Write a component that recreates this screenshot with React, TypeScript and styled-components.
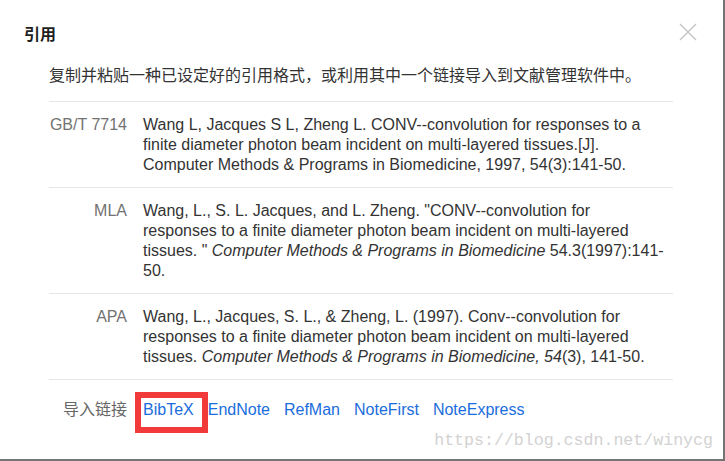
import React from "react";
import styled, { createGlobalStyle } from "styled-components";

const GlobalStyle = createGlobalStyle`
  html, body {
    margin: 0;
    padding: 0;
    background: #fff;
  }
  body {
    font-family: "Liberation Sans", "Noto Sans CJK SC", Arial, sans-serif;
    color: #333;
  }
`;

const Dialog = styled.div`
  position: relative;
  width: 725px;
  height: 461px;
  box-sizing: border-box;
  background: #fff;
  border-right: 2px solid #747474;
  border-bottom: 2px solid #747474;
  overflow: hidden;
`;

const Header = styled.div`
  display: flex;
  align-items: flex-start;
  justify-content: space-between;
  padding: 23px 26px 0 24px;
`;

const Title = styled.h2`
  margin: 0;
  font-size: 16px;
  line-height: 24px;
  font-weight: 700;
  color: #1f1f1f;
`;

const CloseButton = styled.button`
  display: flex;
  width: 18px;
  height: 18px;
  padding: 0;
  border: none;
  background: none;
  cursor: pointer;
  color: #c4c4c4;
`;

const Intro = styled.p`
  margin: 0;
  padding: 18px 50px 14px 49px;
  font-size: 16px;
  line-height: 22px;
  color: #333;
`;

const List = styled.div`
  margin: 0 50px 0 49px;
  border-top: 1px solid #e6e6e6;
`;

const CiteRow = styled.div`
  display: grid;
  grid-template-columns: 78px 522px;
  column-gap: 16px;
  padding: 13px 0 12px;
  border-bottom: 1px solid #e6e6e6;
  font-size: 16px;
  line-height: 20px;
`;

const Style = styled.div`
  text-align: right;
  color: #727272;
  white-space: nowrap;
`;

const Text = styled.div`
  color: #333;
`;

const Footer = styled.div`
  display: grid;
  grid-template-columns: 78px auto;
  column-gap: 16px;
  margin-left: 49px;
  padding-top: 20px;
  font-size: 16px;
  line-height: 20px;
`;

const FooterLabel = styled.span`
  text-align: right;
  color: #666;
`;

const Links = styled.div`
  display: flex;
  gap: 14px;
`;

const Link = styled.a`
  position: relative;
  color: #1a6ddc;
  text-decoration: none;
  cursor: pointer;
`;

const Highlight = styled.span`
  position: absolute;
  left: -8px;
  top: -8px;
  width: 73px;
  height: 41px;
  box-sizing: border-box;
  border: 6px solid #f23a3a;
  pointer-events: none;
`;

const Watermark = styled.div`
  position: absolute;
  right: 10px;
  bottom: 8px;
  font-family: "Liberation Mono", "DejaVu Sans Mono", monospace;
  font-size: 16.6px;
  line-height: 20px;
  color: #d2d2d2;
  pointer-events: none;
`;

function CloseIcon() {
  return (
    <svg width="18" height="18" viewBox="0 0 18 18" fill="none">
      <path d="M1 1L17 17M17 1L1 17" stroke="currentColor" strokeWidth="1.4" />
    </svg>
  );
}

interface Citation {
  style: string;
  text: React.ReactNode;
}

const citations: Citation[] = [
  {
    style: "GB/T 7714",
    text: (
      <>
        Wang L, Jacques S L, Zheng L. CONV--convolution for responses to a finite diameter photon
        beam incident on multi-layered tissues.[J]. Computer Methods &amp; Programs in Biomedicine,
        1997, 54(3):141-50.
      </>
    ),
  },
  {
    style: "MLA",
    text: (
      <>
        Wang, L., S. L. Jacques, and L. Zheng. "CONV--convolution for responses to a finite diameter
        photon beam incident on multi-layered tissues. " <i>Computer Methods &amp; Programs in
        Biomedicine</i> 54.3(1997):141-<wbr />50.
      </>
    ),
  },
  {
    style: "APA",
    text: (
      <>
        Wang, L., Jacques, S. L., &amp; Zheng, L. (1997). Conv--convolution for responses to a finite
        diameter photon beam incident on multi-layered tissues.{" "}
        <i>Computer Methods &amp; Programs in Biomedicine, 54</i>(3), 141-50.
      </>
    ),
  },
];

const exports = ["BibTeX", "EndNote", "RefMan", "NoteFirst", "NoteExpress"];

export default function App() {
  return (
    <Dialog>
      <GlobalStyle />
      <Header>
        <Title>引用</Title>
        <CloseButton aria-label="关闭">
          <CloseIcon />
        </CloseButton>
      </Header>
      <Intro>复制并粘贴一种已设定好的引用格式，或利用其中一个链接导入到文献管理软件中。</Intro>
      <List>
        {citations.map((c) => (
          <CiteRow key={c.style}>
            <Style>{c.style}</Style>
            <Text>{c.text}</Text>
          </CiteRow>
        ))}
      </List>
      <Footer>
        <FooterLabel>导入链接</FooterLabel>
        <Links>
          {exports.map((name, i) => (
            <Link key={name}>
              {name}
              {i === 0 && <Highlight />}
            </Link>
          ))}
        </Links>
      </Footer>
      <Watermark>https://blog.csdn.net/winycg</Watermark>
    </Dialog>
  );
}
